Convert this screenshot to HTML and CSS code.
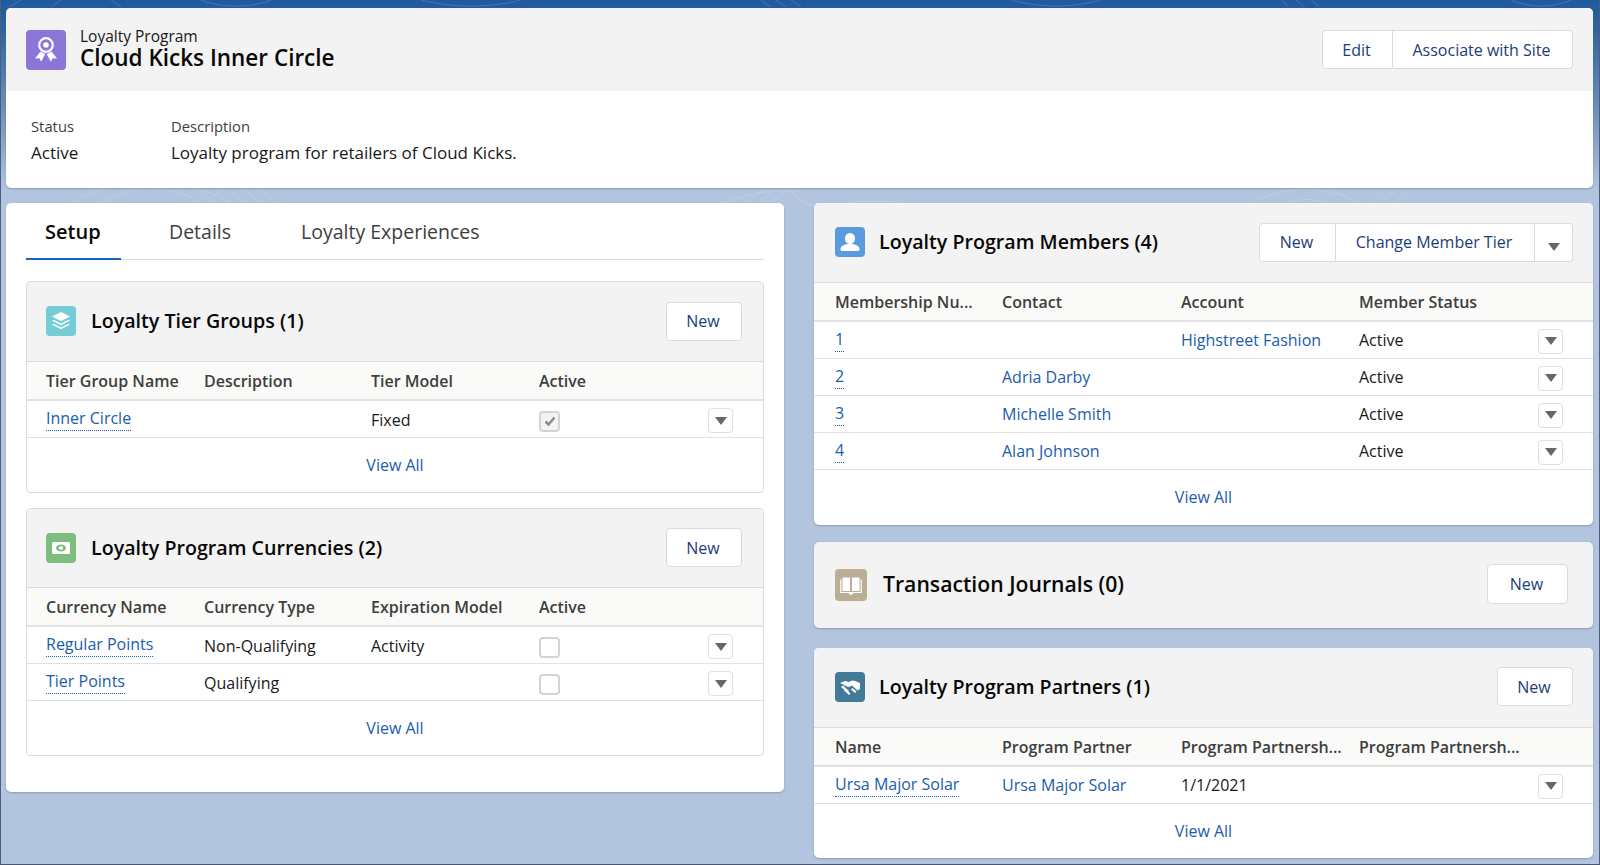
FILE: index.html
```html
<!DOCTYPE html>
<html lang="en">
<head>
<meta charset="utf-8">
<title>Cloud Kicks Inner Circle</title>
<link rel="stylesheet" href="styles.css">
</head>
<body>
<div class="page">
  <svg class="backdrop" viewBox="0 0 1600 210" width="1600" height="210" aria-hidden="true">
    <g fill="none" stroke="#fff" stroke-opacity=".16" stroke-width="1">
      <path d="M60 210C120 170 180 170 240 210M90 210C130 180 170 180 210 210"/>
      <path d="M200 190l20 20M215 190l20 20M230 190l20 20M245 190l20 20M260 190l20 20"/>
      <path d="M720 204c30-12 50-14 80-12M740 208l24-20M752 208l24-20M764 208l24-20"/>
      <path d="M790 190c10 14 20 20 50 14 30-6 60-2 90 4"/>
      <path d="M1240 210c40-28 90-28 130 0M1270 210c24-14 50-14 70 0"/>
      <path d="M1380 192l-18 18M1392 192l-18 18M1404 192l-18 18"/>
      <path d="M20 0l-12 7M60 0l-10 7M110 0l10 7M200 0c20 8 50 8 70 0M420 0c30 8 70 8 100 0M760 0l10 7M775 0l10 7M790 0l10 7M1010 0c30 8 60 8 90 0M1280 0l8 7M1295 0l8 7M1310 0l8 7M1510 0c20 8 40 8 60 0"/>
    </g>
  </svg>
  <section class="panel highlights">
    <header class="hl-head">
      <div class="hl-title">
        <span class="icon icon-40 purple">
          <svg viewBox="0 0 40 40" width="40" height="40"><circle cx="20" cy="15" r="6.800" fill="none" stroke="#fff" stroke-width="2.200"/><circle cx="20" cy="15" r="2.800" fill="#fff"/><path d="M14.500 21.500L9 28.500l4.500-.3 1.600 3.600 4.200-7.700zM25.500 21.500l5.500 7-4.500-.3-1.600 3.600-4.200-7.700z" fill="#fff"/></svg>
        </span>
        <div class="hl-text">
          <div class="hl-kicker">Loyalty Program</div>
          <h1 class="hl-name">Cloud Kicks Inner Circle</h1>
        </div>
      </div>
      <div class="btn-group">
        <a class="btn btn-edit">Edit</a><a class="btn btn-assoc">Associate with Site</a>
      </div>
    </header>
    <div class="hl-fields">
      <div class="field field-status"><div class="field-label">Status</div><div class="field-value">Active</div></div>
      <div class="field"><div class="field-label">Description</div><div class="field-value">Loyalty program for retailers of Cloud Kicks.</div></div>
    </div>
  </section>

  <div class="columns">
    <section class="panel setup">
      <nav class="tabs">
        <a class="tab tab-active">Setup</a>
        <a class="tab tab-details">Details</a>
        <a class="tab tab-exp">Loyalty Experiences</a>
      </nav>

      <article class="rl rl-inner">
        <header class="rl-head">
          <span class="icon icon-30 teal"><svg viewBox="0 0 30 30" width="30" height="30"><path d="M15 6l9 4.500-9 4.500-9-4.500z" fill="#fff"/><path d="M7.500 13.800L15 17.600l7.500-3.800 1.500.8L15 19.200l-9-4.600zM7.500 17.800L15 21.600l7.500-3.800 1.500.8L15 23.200l-9-4.600z" fill="#fff"/></svg></span>
          <h2 class="rl-title">Loyalty Tier Groups (1)</h2>
          <a class="btn btn-new">New</a>
        </header>
        <div class="row row-th cols-left"><span>Tier Group Name</span><span>Description</span><span>Tier Model</span><span>Active</span></div>
        <div class="row cols-left">
          <span><a class="link-record">Inner Circle</a></span><span></span><span>Fixed</span>
          <span class="check check-on"><svg viewBox="0 0 14 14" width="14" height="14"><path d="M2.500 7.500l3 3 6-7" fill="none" stroke="#8a8a8a" stroke-width="2.500"/></svg></span>
          <span class="dd"><i class="tri"></i></span>
        </div>
        <div class="view-all"><a>View All</a></div>
      </article>

      <article class="rl rl-curr">
        <header class="rl-head">
          <span class="icon icon-30 green"><svg viewBox="0 0 30 30" width="30" height="30"><rect x="6" y="9" width="18" height="12" rx="1.500" fill="#fff"/><ellipse cx="15" cy="15" rx="5" ry="3.400" fill="#7dbd7d"/><ellipse cx="15" cy="15" rx="2.200" ry="1.800" fill="#fff"/></svg></span>
          <h2 class="rl-title">Loyalty Program Currencies (2)</h2>
          <a class="btn btn-new">New</a>
        </header>
        <div class="row row-th cols-left"><span>Currency Name</span><span>Currency Type</span><span>Expiration Model</span><span>Active</span></div>
        <div class="row cols-left">
          <span><a class="link-record">Regular Points</a></span><span>Non-Qualifying</span><span>Activity</span>
          <span class="check"></span>
          <span class="dd"><i class="tri"></i></span>
        </div>
        <div class="row cols-left">
          <span><a class="link-record">Tier Points</a></span><span>Qualifying</span><span></span>
          <span class="check"></span>
          <span class="dd"><i class="tri"></i></span>
        </div>
        <div class="view-all"><a>View All</a></div>
      </article>
    </section>

    <div class="right">
      <article class="panel rl-card members">
        <header class="rl-head rl-head-right">
          <span class="icon icon-30 blue"><svg viewBox="0 0 30 30" width="30" height="30"><ellipse cx="15" cy="11.500" rx="5" ry="5.500" fill="#fff"/><path d="M5.500 22c0-3 4-5 9.500-5s9.500 2 9.500 5v.500a1.500 1.500 0 0 1-1.500 1.500H7a1.500 1.500 0 0 1-1.500-1.500z" fill="#fff"/></svg></span>
          <h2 class="rl-title">Loyalty Program Members (4)</h2>
          <div class="btn-group">
            <a class="btn btn-m-new">New</a><a class="btn btn-change">Change Member Tier</a><a class="btn btn-more"><i class="tri tri-lg"></i></a>
          </div>
        </header>
        <div class="row row-th cols-right"><span class="nowrap">Membership Nu...</span><span>Contact</span><span>Account</span><span>Member Status</span></div>
        <div class="row cols-right"><span><a class="link-record">1</a></span><span></span><span><a>Highstreet Fashion</a></span><span>Active</span><span class="dd"><i class="tri"></i></span></div>
        <div class="row cols-right"><span><a class="link-record">2</a></span><span><a>Adria Darby</a></span><span></span><span>Active</span><span class="dd"><i class="tri"></i></span></div>
        <div class="row cols-right"><span><a class="link-record">3</a></span><span><a>Michelle Smith</a></span><span></span><span>Active</span><span class="dd"><i class="tri"></i></span></div>
        <div class="row cols-right"><span><a class="link-record">4</a></span><span><a>Alan Johnson</a></span><span></span><span>Active</span><span class="dd"><i class="tri"></i></span></div>
        <div class="view-all view-members"><a>View All</a></div>
      </article>

      <article class="panel journals">
        <span class="icon icon-32 tan"><svg viewBox="0 0 32 32" width="32" height="32"><path d="M7.500 8.500h7.500v13.500H7.500zM17 8.500h7.500v13.500H17z" fill="#fff"/><path d="M5.800 10.500v13h20.400v-13" fill="none" stroke="#fff" stroke-width="1.200"/><path d="M14 24h4v1.500h-4z" fill="#fff"/></svg></span>
        <h2 class="rl-title">Transaction Journals (0)</h2>
        <a class="btn btn-journal">New</a>
      </article>

      <article class="panel rl-card partners">
        <header class="rl-head rl-head-right">
          <span class="icon icon-30 steel"><svg viewBox="0 0 30 30" width="30" height="30"><path d="M5 11l5-2 4 1 3-1.500 3 .5 5 2v6l-2.500 1.500L17 13.500l-3 1.500-2-.5z" fill="#fff"/><path d="M6 15l2-1.500 6 5.500-1.500 1.500zM9 18.500l1.500-1.500 5 4.500-1.500 1.500zM16 17.500l1.500-1.500 4 3.500-1.500 1.500z" fill="#fff"/></svg></span>
          <h2 class="rl-title">Loyalty Program Partners (1)</h2>
          <a class="btn btn-new">New</a>
        </header>
        <div class="row row-th cols-right"><span>Name</span><span>Program Partner</span><span class="nowrap">Program Partnersh...</span><span class="nowrap">Program Partnersh...</span></div>
        <div class="row cols-right"><span><a class="link-record">Ursa Major Solar</a></span><span><a>Ursa Major Solar</a></span><span>1/1/2021</span><span></span><span class="dd"><i class="tri"></i></span></div>
        <div class="view-all view-partners"><a>View All</a></div>
      </article>
    </div>
  </div>
</div>
</body>
</html>
```

FILE: styles.css
```css
* { box-sizing: border-box; }
html, body { margin: 0; height: 100%; }
body {
  width: 1600px;
  height: 865px;
  overflow: hidden;
  font-family: "Open Sans", "Noto Sans", sans-serif;
  font-size: 16px;
  color: #181818;
  background: #b2c4de;
}
.page {
  position: relative;
  height: 865px;
  padding: 8px 6px 0 5px;
  border-left: 1px solid #4a5f80;
  border-right: 1px solid #4a5f80;
  border-bottom: 1px solid #4a5570;
  background: linear-gradient(#1f5a9e 0, #2f659f 30px, #6e90ba 110px, #b2c4de 190px, #b2c4de 100%);
}
.backdrop { position: absolute; top: 0; left: 0; }
h1, h2 { margin: 0; font-weight: 600; }
a { color: #1a5cad; text-decoration: none; }

.panel {
  position: relative;
  background: #fff;
  border-radius: 5px;
  box-shadow: 0 1px 2px rgba(60, 80, 110, .35);
}
.highlights { height: 180px; overflow: hidden; }
.hl-head {
  height: 83px;
  background: #f3f3f3;
  display: flex;
  align-items: center;
  justify-content: space-between;
  padding: 0 20px 0 20px;
}
.hl-title { display: flex; align-items: center; gap: 14px; }
.hl-text { padding-bottom: 3px; }
.hl-kicker { font-size: 15.500px; line-height: 19px; }
.hl-name { font-size: 22.500px; line-height: 24px; color: #080707; }

.icon { display: block; flex: none; border-radius: 4px; }
.icon svg { display: block; }
.icon-40 { width: 40px; height: 40px; }
.icon-32 { width: 32px; height: 32px; }
.icon-30 { width: 30px; height: 30px; }
.purple { background: #8b76d8; }
.teal { background: #74cdd6; }
.green { background: #7dbd7d; }
.blue { background: #5a9bdd; }
.tan { background: #bcae94; }
.steel { background: #427a98; }

.btn-group { display: flex; }
.btn {
  display: flex;
  align-items: center;
  justify-content: center;
  height: 39px;
  padding-right: 2px;
  background: #fff;
  color: #1c3c78;
  border: 1px solid #dddbda;
  font-size: 16px;
}
.btn-group .btn { border-left-width: 0; }
.btn-group .btn:first-child { border-left-width: 1px; border-radius: 4px 0 0 4px; }
.btn-group .btn:last-child { border-radius: 0 4px 4px 0; }
.btn-edit { width: 71px; }
.btn-assoc { width: 180px; }
.btn-m-new { width: 77px; }
.btn-change { width: 199px; }
.btn-more { width: 38px; padding-right: 0; }
.btn-new { width: 76px; border-radius: 4px; margin-left: auto; }
.btn-journal { width: 81px; height: 40px; border-radius: 4px; margin-left: auto; }
.members .btn { padding-bottom: 2px; }
.members .btn-more { padding-bottom: 0; }

.hl-fields { display: flex; padding: 25px 25px 0; }
.field-status { width: 140px; }
.field-label { font-size: 14.800px; line-height: 20px; color: #3e3e3c; }
.field-value { font-size: 17px; line-height: 24px; margin-top: 5px; }

.columns { display: flex; gap: 30px; margin-top: 15px; align-items: flex-start; }
.setup { width: 778px; height: 589px; padding: 0 20px; }
.right { width: 779px; display: flex; flex-direction: column; }

.tabs {
  display: flex;
  height: 57px;
  border-bottom: 1px solid #dddbda;
  font-size: 19.500px;
}
.tab { display: flex; align-items: center; height: 57px; color: #3e3e3c; }
.tab-active {
  width: 95px;
  padding-left: 19px;
  padding-top: 1px;
  color: #080707;
  font-weight: 600;
  font-size: 20px;
  border-bottom: 2px solid #1565c0;
}
.tab-details { margin-left: 48px; }
.tab-exp { margin-left: 70px; }

.rl {
  border: 1px solid #dddbda;
  border-radius: 4px;
  background: #fff;
  overflow: hidden;
}
.rl-inner { margin-top: 21px; height: 212px; }
.rl-curr { margin-top: 15px; height: 248px; }
.rl-head {
  display: flex;
  align-items: center;
  height: 79px;
  padding: 0 21px 1px 19px;
  background: #f3f3f3;
  border-bottom: 1px solid #dddbda;
}
.rl-inner .rl-head { height: 80px; }
.rl-title { font-size: 19.650px; line-height: 28px; color: #080707; margin-left: 15px; }
.rl-head-right .rl-title { margin-left: 14px; }

.row {
  display: grid;
  align-items: center;
  height: 37px;
  padding-top: 1px;
  border-bottom: 1px solid #e2e2e2;
  font-size: 16px;
  color: #181818;
  white-space: nowrap;
}
.row-th {
  height: 39px;
  background: #fafaf9;
  font-weight: 600;
  color: #3e3e3c;
  border-bottom-width: 2px;
}
.cols-left { grid-template-columns: 158px 167px 168px 1fr 25px; padding-left: 19px; padding-right: 30px; }
.cols-right { grid-template-columns: 167px 179px 178px 1fr 25px; padding-left: 21px; padding-right: 30px; padding-top: 0; }
.nowrap { white-space: nowrap; }

.link-record {
  display: inline-block;
  margin-bottom: 2px;
  line-height: 23px;
  border-bottom: 1px dotted #1a5cad;
}
.cols-right .link-record { margin-bottom: 0; }
.check {
  display: flex;
  align-items: center;
  justify-content: center;
  width: 21px;
  height: 21px;
  margin-top: 3px;
  background: #fff;
  border: 2px solid #d3d3d3;
  border-radius: 4px;
}
.check-on { background: #f3f3f3; }
.dd {
  grid-column: 5;
  display: flex;
  align-items: center;
  justify-content: center;
  width: 25px;
  height: 25px;
  margin-top: 2px;
  border: 1px solid #e0dfde;
  border-radius: 4px;
  background: #fff;
}
.tri {
  display: block;
  width: 0;
  height: 0;
  border-left: 6.500px solid transparent;
  border-right: 6.500px solid transparent;
  border-top: 8px solid #696765;
}
.tri-lg { margin-top: 8px; }
.view-all {
  height: 54px;
  display: flex;
  align-items: center;
  justify-content: center;
  font-size: 16px;
}

.rl-card { overflow: hidden; }
.members { height: 322px; }
.rl-head-right { height: 80px; padding: 0 20px 2px 21px; }
.members .btn-group { margin-left: auto; margin-top: 2px; }
.journals {
  margin-top: 17px;
  height: 86px;
  background: #f3f3f3;
  display: flex;
  align-items: center;
  padding: 0 25px 2px 21px;
}
.journals .icon { margin-top: 2px; }
.journals .rl-title { margin-left: 16px; font-size: 21.200px; }
.partners { margin-top: 20px; height: 210px; }
```
